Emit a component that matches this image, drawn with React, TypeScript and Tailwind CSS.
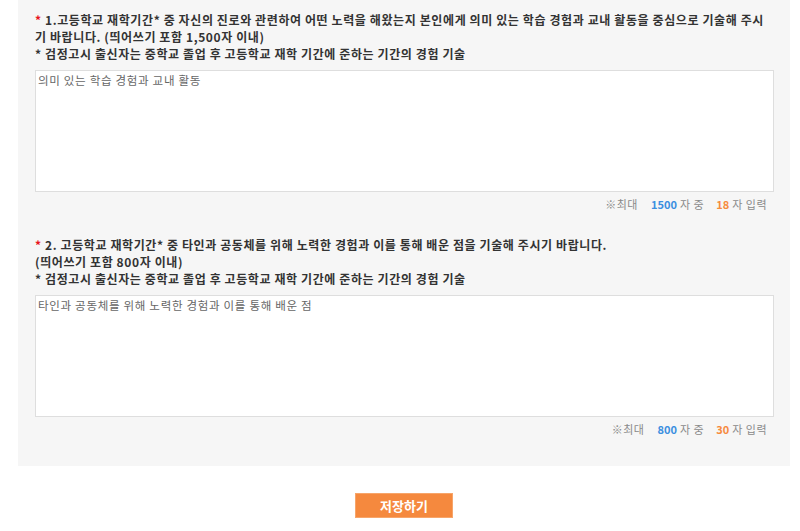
import React from "react"

const font = { fontFamily: '"Noto Sans CJK KR", "Noto Sans", sans-serif' }

function Counter({ max, count }: { max: number; count: number }) {
  return (
    <div className="mt-[4px] flex justify-end pr-[7px] text-[11px] leading-[16px] tracking-[0.5px] text-[#8a8a8a]">
      <span>※최대</span>
      <span className="ml-[13px] font-bold tracking-normal text-[#3b8fe0]">{max}</span>
      <span className="ml-[3px]">자 중</span>
      <span className="ml-[12px] font-bold tracking-normal text-[#f68b3d]">{count}</span>
      <span className="ml-[3px]">자 입력</span>
    </div>
  )
}

function Question({ lines, value, max }: { lines: React.ReactNode[]; value: string; max: number }) {
  return (
    <div>
      <div className="text-[12px] font-bold leading-[17px] tracking-[0.6px] text-[#333333]">
        {lines.map((l, i) => (
          <div key={i} className="whitespace-nowrap">
            {l}
          </div>
        ))}
      </div>
      <textarea
        defaultValue={value}
        className="mt-[8px] block h-[122px] w-full resize-none border border-[#dedede] bg-white px-[2px] py-[1px] text-[11.5px] leading-[17px] tracking-[0.7px] text-[#666666] outline-none"
        style={font}
      />
      <Counter max={max} count={value.length} />
    </div>
  )
}

export default function App() {
  const star = <span className="text-[#e8131c]">*</span>
  return (
    <div className="h-[531px] w-[800px] bg-white" style={font}>
      <div className="ml-[18px] w-[772px] bg-[#f6f6f6] pb-[29px] pl-[17px] pr-[16px] pt-[11px]">
        <Question
          lines={[
            <>
              {star} 1.고등학교 재학기간* 중 자신의 진로와 관련하여 어떤 노력을 해왔는지 본인에게 의미 있는 학습 경험과 교내 활동을 중심으로 기술해 주시
            </>,
            "기 바랍니다. (띄어쓰기 포함 1,500자 이내)",
            "* 검정고시 출신자는 중학교 졸업 후 고등학교 재학 기간에 준하는 기간의 경험 기술",
          ]}
          value="의미 있는 학습 경험과 교내 활동"
          max={1500}
        />
        <div className="mt-[24px]">
          <Question
            lines={[
              <>
                {star} 2. 고등학교 재학기간* 중 타인과 공동체를 위해 노력한 경험과 이를 통해 배운 점을 기술해 주시기 바랍니다.
              </>,
              "(띄어쓰기 포함 800자 이내)",
              "* 검정고시 출신자는 중학교 졸업 후 고등학교 재학 기간에 준하는 기간의 경험 기술",
            ]}
            value="타인과 공동체를 위해 노력한 경험과 이를 통해 배운 점"
            max={800}
          />
        </div>
      </div>
      <div className="ml-[18px] flex w-[772px] justify-center pt-[27px]">
        <button className="h-[25px] w-[98px] border border-[#f7a56a] bg-[#f5893e] text-[13px] font-bold text-white">
          저장하기
        </button>
      </div>
    </div>
  )
}
